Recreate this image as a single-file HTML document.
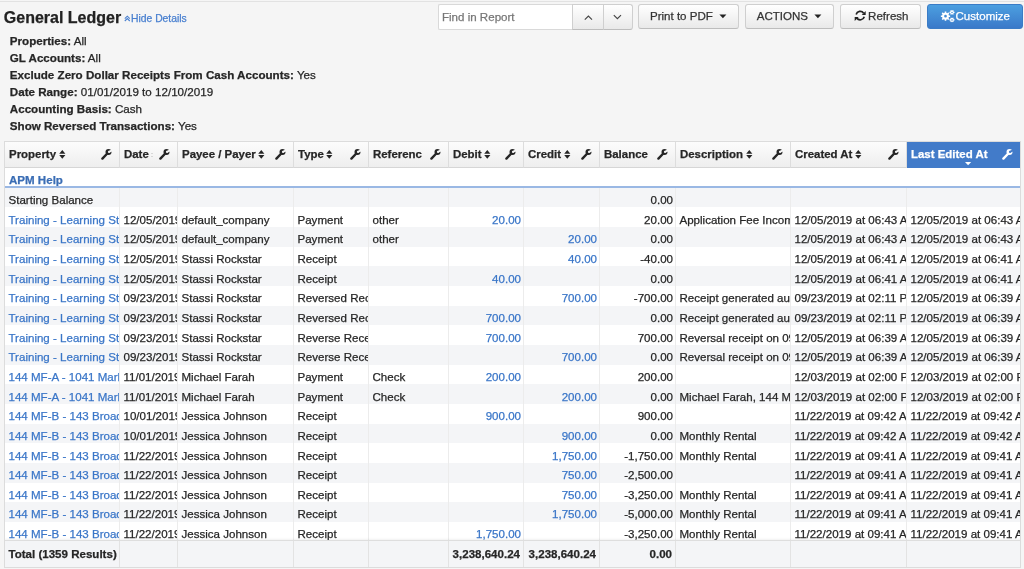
<!DOCTYPE html><html><head><meta charset="utf-8"><style>
*{margin:0;padding:0;box-sizing:border-box}
html,body{width:1024px;height:569px;overflow:hidden;background:#f5f5f5;font-family:"Liberation Sans",sans-serif;color:#262626;position:relative}
#root{position:absolute;left:0;top:0;width:1024px;height:569px;will-change:transform;background:#f5f5f5;-webkit-text-stroke:0.25px currentColor}
.a{position:absolute;white-space:nowrap}
.topline{position:absolute;left:0;top:1px;width:1024px;height:1px;background:#e2e2e2}
.title{left:3.8px;top:8.6px;font-size:16px;font-weight:bold;line-height:18px;color:#222}
.hide{left:123.5px;top:13px;font-size:10.35px;line-height:12px;color:#4a80d0}
.det{left:9.8px;font-size:11.62px;line-height:14px;color:#262626}
.det b{font-weight:bold}
.btn{position:absolute;top:4px;height:25px;border:1px solid #cfcfcf;border-bottom-color:#bdbdbd;border-radius:3px;background:linear-gradient(#ffffff,#e9e9e9);font-size:11.55px;line-height:23px;color:#333;text-align:center;white-space:nowrap}
.caret{display:inline-block;width:0;height:0;border-left:3.5px solid transparent;border-right:3.5px solid transparent;border-top:3.6px solid #222;vertical-align:middle;margin-left:6px;position:relative;top:-1px}
.tbl{position:absolute;left:4px;top:141px;width:1017px;height:427px;border:1px solid #dcdcdc;background:#fff;overflow:hidden}
.hdr{position:absolute;top:0;height:26px;border-right:1px solid #dddddd;border-bottom:1px solid #d6d6d6;background:linear-gradient(#fcfcfc,#eeeeee);font-size:11.45px;font-weight:bold;line-height:14px}
.hdr .t{position:absolute;left:4px;top:4.6px;white-space:nowrap}
.wr{position:absolute;top:7.3px}
.body{position:absolute;left:0;top:46px;width:1017px;height:352px;overflow:hidden}
.row{position:absolute;left:0;width:1017px;height:19.65px}
.c{position:absolute;top:0;height:19.65px;overflow:hidden;white-space:nowrap;font-size:11.55px;line-height:14px;padding:5.3px 3px 0 3.5px}
.c.r{text-align:right;padding-right:3px}
.vl{position:absolute;top:0;width:1px;height:352px;background:#ececec}
.lk{color:#3a76c8}
.tot{position:absolute;left:0;top:398px;width:1017px;height:28px;background:#f4f5f7;border-top:1px solid #dedede;box-shadow:0 -1px 2px rgba(0,0,0,0.06)}
.tc{position:absolute;top:0;height:27px;border-right:1px solid #e3e3e3;font-size:11.55px;font-weight:bold;line-height:14px;padding:6px 3px 0 3.5px;white-space:nowrap;overflow:hidden}
</style></head><body>
<div id="root">
<div class="topline"></div>
<div class="a title">General Ledger</div>
<div class="a hide"><svg width="7" height="7" viewBox="0 0 7 7" style="position:relative;top:-0.3px;margin-right:0.5px"><path d="M0.8 3.6 L3.3 1.2 L5.8 3.6 M0.8 6 L3.3 3.6 L5.8 6" fill="none" stroke="#4a80d0" stroke-width="1.1"/></svg>Hide Details</div>
<div class="a det" style="top:33.6px"><b>Properties:</b> All</div>
<div class="a det" style="top:50.6px"><b>GL Accounts:</b> All</div>
<div class="a det" style="top:67.6px"><b>Exclude Zero Dollar Receipts From Cash Accounts:</b> Yes</div>
<div class="a det" style="top:84.6px"><b>Date Range:</b> 01/01/2019 to 12/10/2019</div>
<div class="a det" style="top:101.6px"><b>Accounting Basis:</b> Cash</div>
<div class="a det" style="top:118.6px"><b>Show Reversed Transactions:</b> Yes</div>
<div class="a" style="left:438px;top:4px;width:135px;height:26px;background:#fff;border:1px solid #d9d9d9;border-right:none;border-radius:2px 0 0 2px"></div>
<div class="a" style="left:442px;top:10px;font-size:11.55px;line-height:14px;color:#777">Find in Report</div>
<div class="btn" style="left:572px;width:31.5px;height:26px;border-radius:0"><svg width="9" height="6" viewBox="0 0 9 6" style="position:absolute;left:10.6px;top:10px"><path d="M0.8 4.6 L4.4 1.1 L8 4.6" fill="none" stroke="#444" stroke-width="1.15"/></svg></div>
<div class="btn" style="left:602.5px;width:30.5px;height:26px;border-radius:0 3px 3px 0"><svg width="9" height="6" viewBox="0 0 9 6" style="position:absolute;left:9.7px;top:9.2px"><path d="M0.8 1.1 L4.4 4.6 L8 1.1" fill="none" stroke="#444" stroke-width="1.15"/></svg></div>
<div class="btn" style="left:638px;width:101px">Print to PDF<svg width="8" height="5" viewBox="0 0 8 5" style="margin-left:6.2px;position:relative;top:-1.2px"><path d="M0.4 0.6 L7.4 0.6 L3.9 4.2Z" fill="#222"/></svg></div>
<div class="btn" style="left:745px;width:89px">ACTIONS<svg width="8" height="5" viewBox="0 0 8 5" style="margin-left:6.2px;position:relative;top:-1.2px"><path d="M0.4 0.6 L7.4 0.6 L3.9 4.2Z" fill="#222"/></svg></div>
<div class="btn" style="left:840px;width:81px"><svg width="13" height="12" viewBox="0 0 13 12" style="position:absolute;left:13px;top:5px"><path d="M2.14 4.51 A4.2 4.2 0 0 1 9.64 3.19" fill="none" stroke="#222" stroke-width="1.7"/><path d="M11.7 0.9 L11.7 4.9 L7.7 4.9Z" fill="#222"/><path d="M10.26 6.69 A4.2 4.2 0 0 1 2.76 8.01" fill="none" stroke="#222" stroke-width="1.7"/><path d="M0.7 10.9 L0.7 6.9 L4.7 6.9Z" fill="#222"/></svg><span style="position:absolute;left:27.1px;top:0">Refresh</span></div>
<div class="btn" style="left:927px;top:3.5px;width:96px;height:25.5px;border-color:#3b7cc6;background:linear-gradient(#4c9fe0,#3a79c9);color:#fff"><svg width="15" height="13" viewBox="0 0 15 13" style="position:absolute;left:12px;top:5.5px"><path d="M8.73 4.86 L8.90 5.38 L10.13 5.40 L10.13 7.00 L8.90 7.02 L8.73 7.54 L8.48 8.03 L9.34 8.91 L8.21 10.04 L7.33 9.18 L6.84 9.43 L6.32 9.60 L6.30 10.83 L4.70 10.83 L4.68 9.60 L4.16 9.43 L3.67 9.18 L2.79 10.04 L1.66 8.91 L2.52 8.03 L2.27 7.54 L2.10 7.02 L0.87 7.00 L0.87 5.40 L2.10 5.38 L2.27 4.86 L2.52 4.37 L1.66 3.49 L2.79 2.36 L3.67 3.22 L4.16 2.97 L4.68 2.80 L4.70 1.57 L6.30 1.57 L6.32 2.80 L6.84 2.97 L7.33 3.22 L8.21 2.36 L9.34 3.49 L8.48 4.37Z M6.85 6.20 A1.35 1.35 0 1 0 4.15 6.20 A1.35 1.35 0 1 0 6.85 6.20Z M13.65 1.45 L13.82 1.86 L14.54 1.86 L14.54 2.94 L13.82 2.94 L13.65 3.35 L13.38 3.71 L13.74 4.33 L12.80 4.87 L12.44 4.25 L12.00 4.30 L11.56 4.25 L11.20 4.87 L10.26 4.33 L10.62 3.71 L10.35 3.35 L10.18 2.94 L9.46 2.94 L9.46 1.86 L10.18 1.86 L10.35 1.45 L10.62 1.09 L10.26 0.47 L11.20 -0.07 L11.56 0.55 L12.00 0.50 L12.44 0.55 L12.80 -0.07 L13.74 0.47 L13.38 1.09Z M12.75 2.40 A0.75 0.75 0 1 0 11.25 2.40 A0.75 0.75 0 1 0 12.75 2.40Z M13.65 8.95 L13.82 9.36 L14.54 9.36 L14.54 10.44 L13.82 10.44 L13.65 10.85 L13.38 11.21 L13.74 11.83 L12.80 12.37 L12.44 11.75 L12.00 11.80 L11.56 11.75 L11.20 12.37 L10.26 11.83 L10.62 11.21 L10.35 10.85 L10.18 10.44 L9.46 10.44 L9.46 9.36 L10.18 9.36 L10.35 8.95 L10.62 8.59 L10.26 7.97 L11.20 7.43 L11.56 8.05 L12.00 8.00 L12.44 8.05 L12.80 7.43 L13.74 7.97 L13.38 8.59Z M12.75 9.90 A0.75 0.75 0 1 0 11.25 9.90 A0.75 0.75 0 1 0 12.75 9.90Z" fill="#fff" fill-rule="evenodd"/></svg><span style="position:absolute;left:27.5px;top:0">Customize</span></div>
<div class="tbl">
<div class="hdr" style="left:0px;width:115px"><span class="t">Property</span>
<svg class="wr" style="left:96px" width="12" height="12" viewBox="0 0 12 12"><defs><mask id="m0"><rect width="12" height="12" fill="#fff"/><circle cx="8.0" cy="2.9" r="1.1" fill="#000"/><rect x="8.0" y="2.0" width="6" height="1.9" transform="rotate(-28 8.0 2.9)" fill="#000"/></mask></defs><g mask="url(#m0)"><circle cx="7.5" cy="3.0" r="3.0" fill="#262626"/></g><line x1="1.4" y1="9.6" x2="5.8" y2="5.0" stroke="#262626" stroke-width="2.4" stroke-linecap="round"/></svg>
</div>
<div class="hdr" style="left:115px;width:58px"><span class="t">Date</span>
<svg class="wr" style="left:39px" width="12" height="12" viewBox="0 0 12 12"><defs><mask id="m1"><rect width="12" height="12" fill="#fff"/><circle cx="8.0" cy="2.9" r="1.1" fill="#000"/><rect x="8.0" y="2.0" width="6" height="1.9" transform="rotate(-28 8.0 2.9)" fill="#000"/></mask></defs><g mask="url(#m1)"><circle cx="7.5" cy="3.0" r="3.0" fill="#262626"/></g><line x1="1.4" y1="9.6" x2="5.8" y2="5.0" stroke="#262626" stroke-width="2.4" stroke-linecap="round"/></svg>
</div>
<div class="hdr" style="left:173px;width:116px"><span class="t">Payee / Payer</span>
<svg class="wr" style="left:97px" width="12" height="12" viewBox="0 0 12 12"><defs><mask id="m2"><rect width="12" height="12" fill="#fff"/><circle cx="8.0" cy="2.9" r="1.1" fill="#000"/><rect x="8.0" y="2.0" width="6" height="1.9" transform="rotate(-28 8.0 2.9)" fill="#000"/></mask></defs><g mask="url(#m2)"><circle cx="7.5" cy="3.0" r="3.0" fill="#262626"/></g><line x1="1.4" y1="9.6" x2="5.8" y2="5.0" stroke="#262626" stroke-width="2.4" stroke-linecap="round"/></svg>
</div>
<div class="hdr" style="left:289px;width:75px"><span class="t">Type</span>
<svg class="wr" style="left:56px" width="12" height="12" viewBox="0 0 12 12"><defs><mask id="m3"><rect width="12" height="12" fill="#fff"/><circle cx="8.0" cy="2.9" r="1.1" fill="#000"/><rect x="8.0" y="2.0" width="6" height="1.9" transform="rotate(-28 8.0 2.9)" fill="#000"/></mask></defs><g mask="url(#m3)"><circle cx="7.5" cy="3.0" r="3.0" fill="#262626"/></g><line x1="1.4" y1="9.6" x2="5.8" y2="5.0" stroke="#262626" stroke-width="2.4" stroke-linecap="round"/></svg>
</div>
<div class="hdr" style="left:364px;width:80px"><span class="t">Referenc</span>
<svg class="wr" style="left:61px" width="12" height="12" viewBox="0 0 12 12"><defs><mask id="m4"><rect width="12" height="12" fill="#fff"/><circle cx="8.0" cy="2.9" r="1.1" fill="#000"/><rect x="8.0" y="2.0" width="6" height="1.9" transform="rotate(-28 8.0 2.9)" fill="#000"/></mask></defs><g mask="url(#m4)"><circle cx="7.5" cy="3.0" r="3.0" fill="#262626"/></g><line x1="1.4" y1="9.6" x2="5.8" y2="5.0" stroke="#262626" stroke-width="2.4" stroke-linecap="round"/></svg>
</div>
<div class="hdr" style="left:444px;width:75px"><span class="t">Debit</span>
<svg class="wr" style="left:56px" width="12" height="12" viewBox="0 0 12 12"><defs><mask id="m5"><rect width="12" height="12" fill="#fff"/><circle cx="8.0" cy="2.9" r="1.1" fill="#000"/><rect x="8.0" y="2.0" width="6" height="1.9" transform="rotate(-28 8.0 2.9)" fill="#000"/></mask></defs><g mask="url(#m5)"><circle cx="7.5" cy="3.0" r="3.0" fill="#262626"/></g><line x1="1.4" y1="9.6" x2="5.8" y2="5.0" stroke="#262626" stroke-width="2.4" stroke-linecap="round"/></svg>
</div>
<div class="hdr" style="left:519px;width:76px"><span class="t">Credit</span>
<svg class="wr" style="left:57px" width="12" height="12" viewBox="0 0 12 12"><defs><mask id="m6"><rect width="12" height="12" fill="#fff"/><circle cx="8.0" cy="2.9" r="1.1" fill="#000"/><rect x="8.0" y="2.0" width="6" height="1.9" transform="rotate(-28 8.0 2.9)" fill="#000"/></mask></defs><g mask="url(#m6)"><circle cx="7.5" cy="3.0" r="3.0" fill="#262626"/></g><line x1="1.4" y1="9.6" x2="5.8" y2="5.0" stroke="#262626" stroke-width="2.4" stroke-linecap="round"/></svg>
</div>
<div class="hdr" style="left:595px;width:76px"><span class="t">Balance</span>
<svg class="wr" style="left:57px" width="12" height="12" viewBox="0 0 12 12"><defs><mask id="m7"><rect width="12" height="12" fill="#fff"/><circle cx="8.0" cy="2.9" r="1.1" fill="#000"/><rect x="8.0" y="2.0" width="6" height="1.9" transform="rotate(-28 8.0 2.9)" fill="#000"/></mask></defs><g mask="url(#m7)"><circle cx="7.5" cy="3.0" r="3.0" fill="#262626"/></g><line x1="1.4" y1="9.6" x2="5.8" y2="5.0" stroke="#262626" stroke-width="2.4" stroke-linecap="round"/></svg>
</div>
<div class="hdr" style="left:671px;width:115px"><span class="t">Description</span>
<svg class="wr" style="left:96px" width="12" height="12" viewBox="0 0 12 12"><defs><mask id="m8"><rect width="12" height="12" fill="#fff"/><circle cx="8.0" cy="2.9" r="1.1" fill="#000"/><rect x="8.0" y="2.0" width="6" height="1.9" transform="rotate(-28 8.0 2.9)" fill="#000"/></mask></defs><g mask="url(#m8)"><circle cx="7.5" cy="3.0" r="3.0" fill="#262626"/></g><line x1="1.4" y1="9.6" x2="5.8" y2="5.0" stroke="#262626" stroke-width="2.4" stroke-linecap="round"/></svg>
</div>
<div class="hdr" style="left:786px;width:116px"><span class="t">Created At</span>
<svg class="wr" style="left:97px" width="12" height="12" viewBox="0 0 12 12"><defs><mask id="m9"><rect width="12" height="12" fill="#fff"/><circle cx="8.0" cy="2.9" r="1.1" fill="#000"/><rect x="8.0" y="2.0" width="6" height="1.9" transform="rotate(-28 8.0 2.9)" fill="#000"/></mask></defs><g mask="url(#m9)"><circle cx="7.5" cy="3.0" r="3.0" fill="#262626"/></g><line x1="1.4" y1="9.6" x2="5.8" y2="5.0" stroke="#262626" stroke-width="2.4" stroke-linecap="round"/></svg>
</div>
<div class="hdr" style="left:902px;width:114px;background:#427bc9;color:#fff;border-bottom-color:#427bc9;border-right:none"><span class="t">Last Edited At</span>
<svg class="wr" style="left:95px" width="12" height="12" viewBox="0 0 12 12"><defs><mask id="m10"><rect width="12" height="12" fill="#fff"/><circle cx="8.0" cy="2.9" r="1.1" fill="#000"/><rect x="8.0" y="2.0" width="6" height="1.9" transform="rotate(-28 8.0 2.9)" fill="#000"/></mask></defs><g mask="url(#m10)"><circle cx="7.5" cy="3.0" r="3.0" fill="#fff"/></g><line x1="1.4" y1="9.6" x2="5.8" y2="5.0" stroke="#fff" stroke-width="2.4" stroke-linecap="round"/></svg>
</div>
<svg style="position:absolute;left:53.68615703125px;top:7.9px;opacity:1" width="7" height="9" viewBox="0 0 7 9"><path d="M0.2 3.8 L3.3 0.1 L6.4 3.8Z M0.2 5 L6.4 5 L3.3 8.7Z" fill="#262626"/></svg>
<svg style="position:absolute;left:146.417875px;top:9px" width="3" height="8"><rect x="0.5" y="2" width="1" height="1" fill="#bbb"/><rect x="0.5" y="5" width="1" height="1" fill="#bbb"/></svg>
<svg style="position:absolute;left:253.44945859375px;top:7.9px;opacity:1" width="7" height="9" viewBox="0 0 7 9"><path d="M0.2 3.8 L3.3 0.1 L6.4 3.8Z M0.2 5 L6.4 5 L3.3 8.7Z" fill="#262626"/></svg>
<svg style="position:absolute;left:321.47449531250004px;top:7.9px;opacity:1" width="7" height="9" viewBox="0 0 7 9"><path d="M0.2 3.8 L3.3 0.1 L6.4 3.8Z M0.2 5 L6.4 5 L3.3 8.7Z" fill="#262626"/></svg>
<svg style="position:absolute;left:479.22517890625px;top:7.9px;opacity:1" width="7" height="9" viewBox="0 0 7 9"><path d="M0.2 3.8 L3.3 0.1 L6.4 3.8Z M0.2 5 L6.4 5 L3.3 8.7Z" fill="#262626"/></svg>
<svg style="position:absolute;left:558.68101796875px;top:7.9px;opacity:1" width="7" height="9" viewBox="0 0 7 9"><path d="M0.2 3.8 L3.3 0.1 L6.4 3.8Z M0.2 5 L6.4 5 L3.3 8.7Z" fill="#262626"/></svg>
<svg style="position:absolute;left:740.58645px;top:7.9px;opacity:1" width="7" height="9" viewBox="0 0 7 9"><path d="M0.2 3.8 L3.3 0.1 L6.4 3.8Z M0.2 5 L6.4 5 L3.3 8.7Z" fill="#262626"/></svg>
<svg style="position:absolute;left:850.073990625px;top:7.9px;opacity:1" width="7" height="9" viewBox="0 0 7 9"><path d="M0.2 3.8 L3.3 0.1 L6.4 3.8Z M0.2 5 L6.4 5 L3.3 8.7Z" fill="#262626"/></svg>
<div class="a" style="left:960.6px;top:161px;width:0;height:0"></div>
<svg style="position:absolute;left:960.4px;top:20.19999999999999px" width="7" height="4" viewBox="0 0 7 4"><path d="M0 0 L6.2 0 L3.1 3.2Z" fill="#fff"/></svg>
<div class="a" style="left:4px;top:31px;font-size:11.55px;font-weight:bold;line-height:14px;color:#3a6db5">APM Help</div>
<div class="a" style="left:0;top:44px;width:1017px;height:2px;background:#9ab8e4"></div>
<div class="body">
<div class="row" style="top:-0.20px;background:#f4f5f7">
<div class="c" style="left:0px;width:115px">Starting Balance</div>
<div class="c" style="left:115px;width:58px"></div>
<div class="c" style="left:173px;width:116px"></div>
<div class="c" style="left:289px;width:75px"></div>
<div class="c" style="left:364px;width:80px"></div>
<div class="c r" style="left:444px;width:75px"></div>
<div class="c r" style="left:519px;width:76px"></div>
<div class="c r" style="left:595px;width:76px">0.00</div>
<div class="c" style="left:671px;width:115px"></div>
<div class="c" style="left:786px;width:116px"></div>
<div class="c" style="left:902px;width:114px;border-right:none"></div>
</div>
<div class="row" style="top:19.45px;background:#fff">
<div class="c" style="left:0px;width:115px"><span class="lk">Training - Learning Studio</span></div>
<div class="c" style="left:115px;width:58px">12/05/2019</div>
<div class="c" style="left:173px;width:116px">default_company</div>
<div class="c" style="left:289px;width:75px">Payment</div>
<div class="c" style="left:364px;width:80px">other</div>
<div class="c r" style="left:444px;width:75px"><span class="lk">20.00</span></div>
<div class="c r" style="left:519px;width:76px"></div>
<div class="c r" style="left:595px;width:76px">20.00</div>
<div class="c" style="left:671px;width:115px">Application Fee Income</div>
<div class="c" style="left:786px;width:116px">12/05/2019 at 06:43 AM</div>
<div class="c" style="left:902px;width:114px;border-right:none">12/05/2019 at 06:43 AM</div>
</div>
<div class="row" style="top:39.10px;background:#f4f5f7">
<div class="c" style="left:0px;width:115px"><span class="lk">Training - Learning Studio</span></div>
<div class="c" style="left:115px;width:58px">12/05/2019</div>
<div class="c" style="left:173px;width:116px">default_company</div>
<div class="c" style="left:289px;width:75px">Payment</div>
<div class="c" style="left:364px;width:80px">other</div>
<div class="c r" style="left:444px;width:75px"></div>
<div class="c r" style="left:519px;width:76px"><span class="lk">20.00</span></div>
<div class="c r" style="left:595px;width:76px">0.00</div>
<div class="c" style="left:671px;width:115px"></div>
<div class="c" style="left:786px;width:116px">12/05/2019 at 06:43 AM</div>
<div class="c" style="left:902px;width:114px;border-right:none">12/05/2019 at 06:43 AM</div>
</div>
<div class="row" style="top:58.75px;background:#fff">
<div class="c" style="left:0px;width:115px"><span class="lk">Training - Learning Studio</span></div>
<div class="c" style="left:115px;width:58px">12/05/2019</div>
<div class="c" style="left:173px;width:116px">Stassi Rockstar</div>
<div class="c" style="left:289px;width:75px">Receipt</div>
<div class="c" style="left:364px;width:80px"></div>
<div class="c r" style="left:444px;width:75px"></div>
<div class="c r" style="left:519px;width:76px"><span class="lk">40.00</span></div>
<div class="c r" style="left:595px;width:76px">-40.00</div>
<div class="c" style="left:671px;width:115px"></div>
<div class="c" style="left:786px;width:116px">12/05/2019 at 06:41 AM</div>
<div class="c" style="left:902px;width:114px;border-right:none">12/05/2019 at 06:41 AM</div>
</div>
<div class="row" style="top:78.40px;background:#f4f5f7">
<div class="c" style="left:0px;width:115px"><span class="lk">Training - Learning Studio</span></div>
<div class="c" style="left:115px;width:58px">12/05/2019</div>
<div class="c" style="left:173px;width:116px">Stassi Rockstar</div>
<div class="c" style="left:289px;width:75px">Receipt</div>
<div class="c" style="left:364px;width:80px"></div>
<div class="c r" style="left:444px;width:75px"><span class="lk">40.00</span></div>
<div class="c r" style="left:519px;width:76px"></div>
<div class="c r" style="left:595px;width:76px">0.00</div>
<div class="c" style="left:671px;width:115px"></div>
<div class="c" style="left:786px;width:116px">12/05/2019 at 06:41 AM</div>
<div class="c" style="left:902px;width:114px;border-right:none">12/05/2019 at 06:41 AM</div>
</div>
<div class="row" style="top:98.05px;background:#fff">
<div class="c" style="left:0px;width:115px"><span class="lk">Training - Learning Studio</span></div>
<div class="c" style="left:115px;width:58px">09/23/2019</div>
<div class="c" style="left:173px;width:116px">Stassi Rockstar</div>
<div class="c" style="left:289px;width:75px">Reversed Receipt</div>
<div class="c" style="left:364px;width:80px"></div>
<div class="c r" style="left:444px;width:75px"></div>
<div class="c r" style="left:519px;width:76px"><span class="lk">700.00</span></div>
<div class="c r" style="left:595px;width:76px">-700.00</div>
<div class="c" style="left:671px;width:115px">Receipt generated automatically</div>
<div class="c" style="left:786px;width:116px">09/23/2019 at 02:11 PM</div>
<div class="c" style="left:902px;width:114px;border-right:none">12/05/2019 at 06:39 AM</div>
</div>
<div class="row" style="top:117.70px;background:#f4f5f7">
<div class="c" style="left:0px;width:115px"><span class="lk">Training - Learning Studio</span></div>
<div class="c" style="left:115px;width:58px">09/23/2019</div>
<div class="c" style="left:173px;width:116px">Stassi Rockstar</div>
<div class="c" style="left:289px;width:75px">Reversed Receipt</div>
<div class="c" style="left:364px;width:80px"></div>
<div class="c r" style="left:444px;width:75px"><span class="lk">700.00</span></div>
<div class="c r" style="left:519px;width:76px"></div>
<div class="c r" style="left:595px;width:76px">0.00</div>
<div class="c" style="left:671px;width:115px">Receipt generated automatically</div>
<div class="c" style="left:786px;width:116px">09/23/2019 at 02:11 PM</div>
<div class="c" style="left:902px;width:114px;border-right:none">12/05/2019 at 06:39 AM</div>
</div>
<div class="row" style="top:137.35px;background:#fff">
<div class="c" style="left:0px;width:115px"><span class="lk">Training - Learning Studio</span></div>
<div class="c" style="left:115px;width:58px">09/23/2019</div>
<div class="c" style="left:173px;width:116px">Stassi Rockstar</div>
<div class="c" style="left:289px;width:75px">Reverse Receipt</div>
<div class="c" style="left:364px;width:80px"></div>
<div class="c r" style="left:444px;width:75px"><span class="lk">700.00</span></div>
<div class="c r" style="left:519px;width:76px"></div>
<div class="c r" style="left:595px;width:76px">700.00</div>
<div class="c" style="left:671px;width:115px">Reversal receipt on 09/23/2019</div>
<div class="c" style="left:786px;width:116px">12/05/2019 at 06:39 AM</div>
<div class="c" style="left:902px;width:114px;border-right:none">12/05/2019 at 06:39 AM</div>
</div>
<div class="row" style="top:157.00px;background:#f4f5f7">
<div class="c" style="left:0px;width:115px"><span class="lk">Training - Learning Studio</span></div>
<div class="c" style="left:115px;width:58px">09/23/2019</div>
<div class="c" style="left:173px;width:116px">Stassi Rockstar</div>
<div class="c" style="left:289px;width:75px">Reverse Receipt</div>
<div class="c" style="left:364px;width:80px"></div>
<div class="c r" style="left:444px;width:75px"></div>
<div class="c r" style="left:519px;width:76px"><span class="lk">700.00</span></div>
<div class="c r" style="left:595px;width:76px">0.00</div>
<div class="c" style="left:671px;width:115px">Reversal receipt on 09/23/2019</div>
<div class="c" style="left:786px;width:116px">12/05/2019 at 06:39 AM</div>
<div class="c" style="left:902px;width:114px;border-right:none">12/05/2019 at 06:39 AM</div>
</div>
<div class="row" style="top:176.65px;background:#fff">
<div class="c" style="left:0px;width:115px"><span class="lk">144 MF-A - 1041 Market</span></div>
<div class="c" style="left:115px;width:58px">11/01/2019</div>
<div class="c" style="left:173px;width:116px">Michael Farah</div>
<div class="c" style="left:289px;width:75px">Payment</div>
<div class="c" style="left:364px;width:80px">Check</div>
<div class="c r" style="left:444px;width:75px"><span class="lk">200.00</span></div>
<div class="c r" style="left:519px;width:76px"></div>
<div class="c r" style="left:595px;width:76px">200.00</div>
<div class="c" style="left:671px;width:115px"></div>
<div class="c" style="left:786px;width:116px">12/03/2019 at 02:00 PM</div>
<div class="c" style="left:902px;width:114px;border-right:none">12/03/2019 at 02:00 PM</div>
</div>
<div class="row" style="top:196.30px;background:#f4f5f7">
<div class="c" style="left:0px;width:115px"><span class="lk">144 MF-A - 1041 Market</span></div>
<div class="c" style="left:115px;width:58px">11/01/2019</div>
<div class="c" style="left:173px;width:116px">Michael Farah</div>
<div class="c" style="left:289px;width:75px">Payment</div>
<div class="c" style="left:364px;width:80px">Check</div>
<div class="c r" style="left:444px;width:75px"></div>
<div class="c r" style="left:519px;width:76px"><span class="lk">200.00</span></div>
<div class="c r" style="left:595px;width:76px">0.00</div>
<div class="c" style="left:671px;width:115px">Michael Farah, 144 MF-A</div>
<div class="c" style="left:786px;width:116px">12/03/2019 at 02:00 PM</div>
<div class="c" style="left:902px;width:114px;border-right:none">12/03/2019 at 02:00 PM</div>
</div>
<div class="row" style="top:215.95px;background:#fff">
<div class="c" style="left:0px;width:115px"><span class="lk">144 MF-B - 143 Broadway</span></div>
<div class="c" style="left:115px;width:58px">10/01/2019</div>
<div class="c" style="left:173px;width:116px">Jessica Johnson</div>
<div class="c" style="left:289px;width:75px">Receipt</div>
<div class="c" style="left:364px;width:80px"></div>
<div class="c r" style="left:444px;width:75px"><span class="lk">900.00</span></div>
<div class="c r" style="left:519px;width:76px"></div>
<div class="c r" style="left:595px;width:76px">900.00</div>
<div class="c" style="left:671px;width:115px"></div>
<div class="c" style="left:786px;width:116px">11/22/2019 at 09:42 AM</div>
<div class="c" style="left:902px;width:114px;border-right:none">11/22/2019 at 09:42 AM</div>
</div>
<div class="row" style="top:235.60px;background:#f4f5f7">
<div class="c" style="left:0px;width:115px"><span class="lk">144 MF-B - 143 Broadway</span></div>
<div class="c" style="left:115px;width:58px">10/01/2019</div>
<div class="c" style="left:173px;width:116px">Jessica Johnson</div>
<div class="c" style="left:289px;width:75px">Receipt</div>
<div class="c" style="left:364px;width:80px"></div>
<div class="c r" style="left:444px;width:75px"></div>
<div class="c r" style="left:519px;width:76px"><span class="lk">900.00</span></div>
<div class="c r" style="left:595px;width:76px">0.00</div>
<div class="c" style="left:671px;width:115px">Monthly Rental</div>
<div class="c" style="left:786px;width:116px">11/22/2019 at 09:42 AM</div>
<div class="c" style="left:902px;width:114px;border-right:none">11/22/2019 at 09:42 AM</div>
</div>
<div class="row" style="top:255.25px;background:#fff">
<div class="c" style="left:0px;width:115px"><span class="lk">144 MF-B - 143 Broadway</span></div>
<div class="c" style="left:115px;width:58px">11/22/2019</div>
<div class="c" style="left:173px;width:116px">Jessica Johnson</div>
<div class="c" style="left:289px;width:75px">Receipt</div>
<div class="c" style="left:364px;width:80px"></div>
<div class="c r" style="left:444px;width:75px"></div>
<div class="c r" style="left:519px;width:76px"><span class="lk">1,750.00</span></div>
<div class="c r" style="left:595px;width:76px">-1,750.00</div>
<div class="c" style="left:671px;width:115px">Monthly Rental</div>
<div class="c" style="left:786px;width:116px">11/22/2019 at 09:41 AM</div>
<div class="c" style="left:902px;width:114px;border-right:none">11/22/2019 at 09:41 AM</div>
</div>
<div class="row" style="top:274.90px;background:#f4f5f7">
<div class="c" style="left:0px;width:115px"><span class="lk">144 MF-B - 143 Broadway</span></div>
<div class="c" style="left:115px;width:58px">11/22/2019</div>
<div class="c" style="left:173px;width:116px">Jessica Johnson</div>
<div class="c" style="left:289px;width:75px">Receipt</div>
<div class="c" style="left:364px;width:80px"></div>
<div class="c r" style="left:444px;width:75px"></div>
<div class="c r" style="left:519px;width:76px"><span class="lk">750.00</span></div>
<div class="c r" style="left:595px;width:76px">-2,500.00</div>
<div class="c" style="left:671px;width:115px"></div>
<div class="c" style="left:786px;width:116px">11/22/2019 at 09:41 AM</div>
<div class="c" style="left:902px;width:114px;border-right:none">11/22/2019 at 09:41 AM</div>
</div>
<div class="row" style="top:294.55px;background:#fff">
<div class="c" style="left:0px;width:115px"><span class="lk">144 MF-B - 143 Broadway</span></div>
<div class="c" style="left:115px;width:58px">11/22/2019</div>
<div class="c" style="left:173px;width:116px">Jessica Johnson</div>
<div class="c" style="left:289px;width:75px">Receipt</div>
<div class="c" style="left:364px;width:80px"></div>
<div class="c r" style="left:444px;width:75px"></div>
<div class="c r" style="left:519px;width:76px"><span class="lk">750.00</span></div>
<div class="c r" style="left:595px;width:76px">-3,250.00</div>
<div class="c" style="left:671px;width:115px">Monthly Rental</div>
<div class="c" style="left:786px;width:116px">11/22/2019 at 09:41 AM</div>
<div class="c" style="left:902px;width:114px;border-right:none">11/22/2019 at 09:41 AM</div>
</div>
<div class="row" style="top:314.20px;background:#f4f5f7">
<div class="c" style="left:0px;width:115px"><span class="lk">144 MF-B - 143 Broadway</span></div>
<div class="c" style="left:115px;width:58px">11/22/2019</div>
<div class="c" style="left:173px;width:116px">Jessica Johnson</div>
<div class="c" style="left:289px;width:75px">Receipt</div>
<div class="c" style="left:364px;width:80px"></div>
<div class="c r" style="left:444px;width:75px"></div>
<div class="c r" style="left:519px;width:76px"><span class="lk">1,750.00</span></div>
<div class="c r" style="left:595px;width:76px">-5,000.00</div>
<div class="c" style="left:671px;width:115px">Monthly Rental</div>
<div class="c" style="left:786px;width:116px">11/22/2019 at 09:41 AM</div>
<div class="c" style="left:902px;width:114px;border-right:none">11/22/2019 at 09:41 AM</div>
</div>
<div class="row" style="top:333.85px;background:#fff">
<div class="c" style="left:0px;width:115px"><span class="lk">144 MF-B - 143 Broadway</span></div>
<div class="c" style="left:115px;width:58px">11/22/2019</div>
<div class="c" style="left:173px;width:116px">Jessica Johnson</div>
<div class="c" style="left:289px;width:75px">Receipt</div>
<div class="c" style="left:364px;width:80px"></div>
<div class="c r" style="left:444px;width:75px"><span class="lk">1,750.00</span></div>
<div class="c r" style="left:519px;width:76px"></div>
<div class="c r" style="left:595px;width:76px">-3,250.00</div>
<div class="c" style="left:671px;width:115px">Monthly Rental</div>
<div class="c" style="left:786px;width:116px">11/22/2019 at 09:41 AM</div>
<div class="c" style="left:902px;width:114px;border-right:none">11/22/2019 at 09:41 AM</div>
</div>
<div class="vl" style="left:114px"></div>
<div class="vl" style="left:172px"></div>
<div class="vl" style="left:288px"></div>
<div class="vl" style="left:363px"></div>
<div class="vl" style="left:443px"></div>
<div class="vl" style="left:518px"></div>
<div class="vl" style="left:594px"></div>
<div class="vl" style="left:670px"></div>
<div class="vl" style="left:785px"></div>
<div class="vl" style="left:901px"></div>
</div>
<div class="tot">
<div class="tc" style="left:0px;width:115px">Total (1359 Results)</div>
<div class="tc" style="left:115px;width:58px"></div>
<div class="tc" style="left:173px;width:116px"></div>
<div class="tc" style="left:289px;width:75px"></div>
<div class="tc" style="left:364px;width:80px"></div>
<div class="tc" style="left:444px;width:75px;text-align:right">3,238,640.24</div>
<div class="tc" style="left:519px;width:76px;text-align:right">3,238,640.24</div>
<div class="tc" style="left:595px;width:76px;text-align:right">0.00</div>
<div class="tc" style="left:671px;width:115px"></div>
<div class="tc" style="left:786px;width:116px"></div>
<div class="tc" style="left:902px;width:114px;border-right:none"></div>
</div>
</div>
</div>
</body></html>
